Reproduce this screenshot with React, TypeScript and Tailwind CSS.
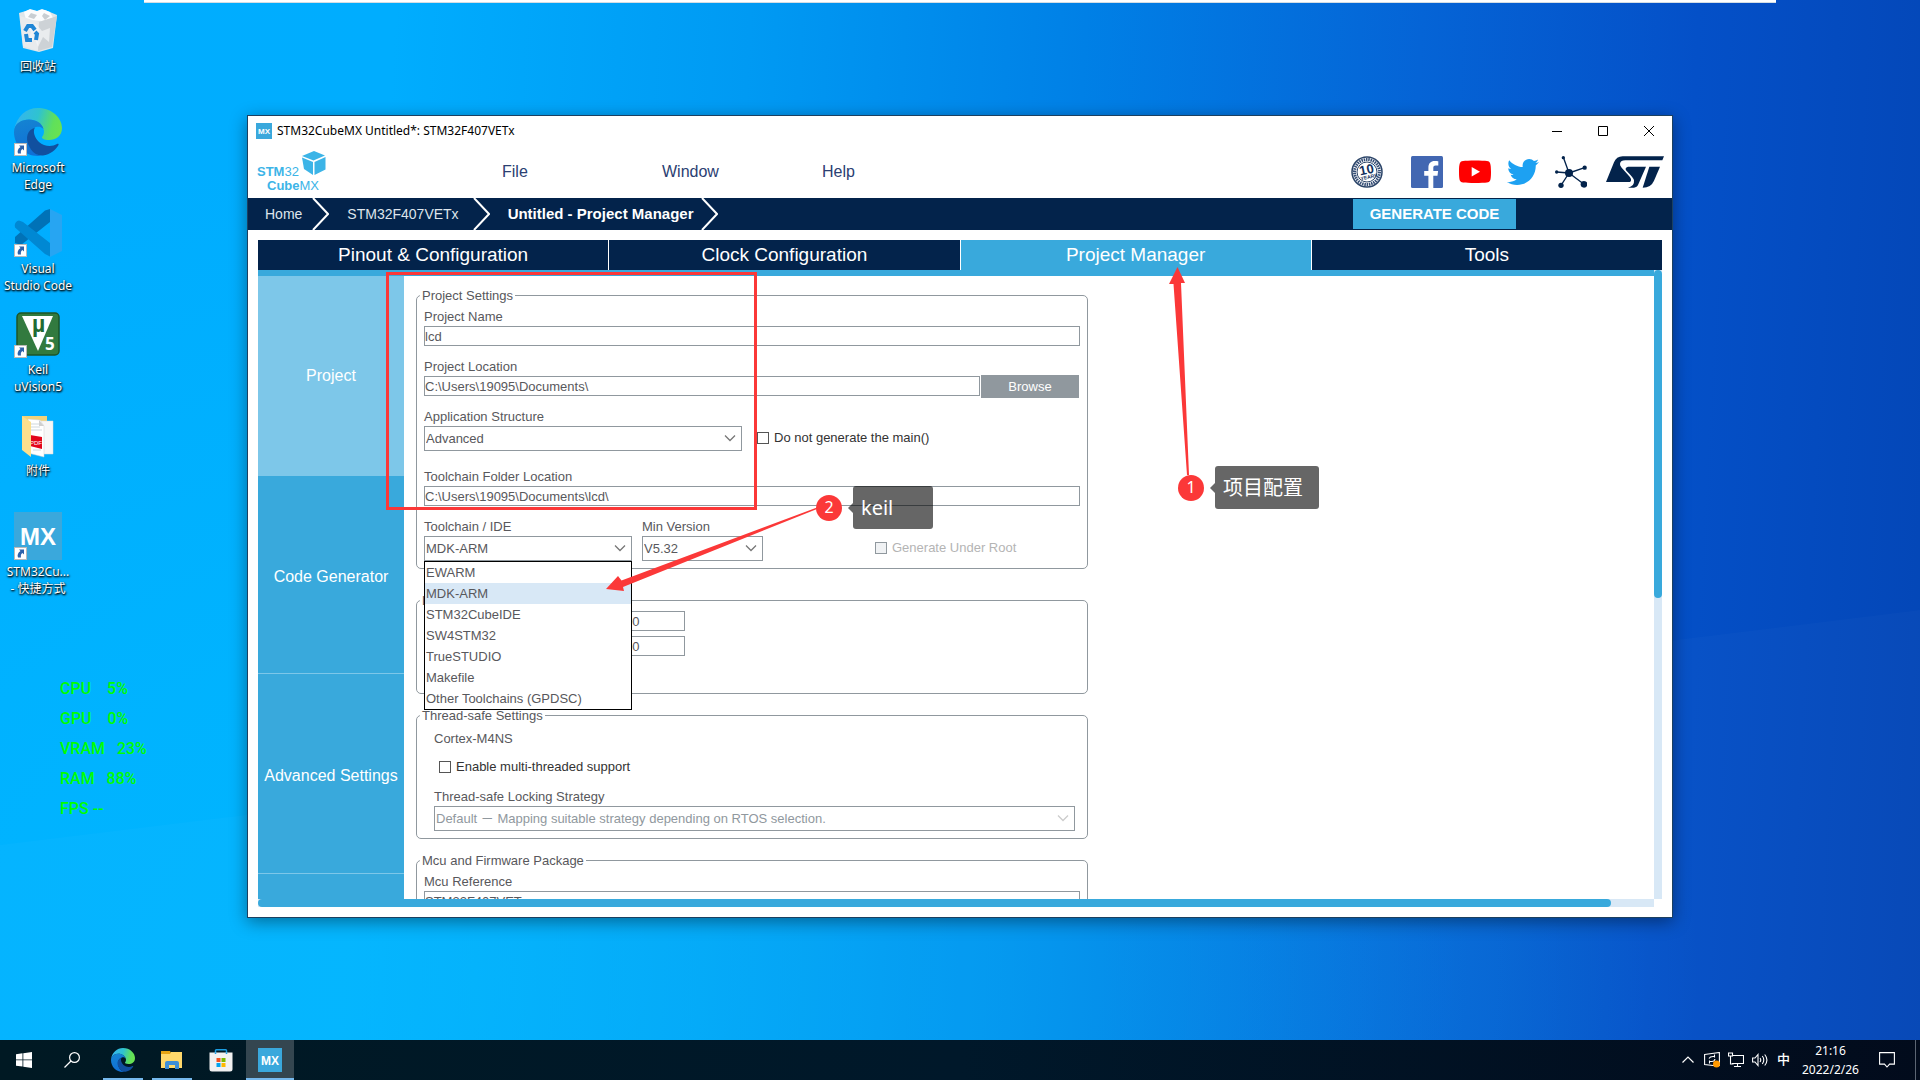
import React, { useState } from "react";
import { FaTwitter } from "react-icons/fa";

const TOOLCHAINS = ["EWARM", "MDK-ARM", "STM32CubeIDE", "SW4STM32", "TrueSTUDIO", "Makefile", "Other Toolchains (GPDSC)"];
const TABS = ["Pinout & Configuration", "Clock Configuration", "Project Manager", "Tools"];
const STATS = ["CPU    5%", "GPU    0%", "VRAM   23%", "RAM   88%", "FPS --"];

const UI_FONT = "font-['Noto_Sans','Noto_Sans_CJK_SC',sans-serif]";
const APP_FONT = "font-['Liberation_Sans','Noto_Sans_CJK_SC',sans-serif]";

/* ---------- Icons ---------- */

function EdgeIcon({ id, className }: { id: string; className: string }) {
  return (
    <svg viewBox="0 0 48 48" className={className} aria-hidden="true">
      <defs>
        <linearGradient id={`${id}-top`} x1="0" y1="0.4" x2="1" y2="0.6">
          <stop offset="0" stopColor="#35b4f0" />
          <stop offset="0.45" stopColor="#2fc3d0" />
          <stop offset="0.8" stopColor="#5fe05c" />
          <stop offset="1" stopColor="#6be24f" />
        </linearGradient>
        <linearGradient id={`${id}-left`} x1="0.3" y1="0" x2="0.5" y2="1">
          <stop offset="0" stopColor="#1583d2" />
          <stop offset="1" stopColor="#0f6fd6" />
        </linearGradient>
      </defs>
      <path fill={`url(#${id}-top)`} d="M0 22C3 8 12 0 24 0c14 0 24 10 24 20 0 8-6 12-13 12-5 0-7.500-1.500-7-3 1-1 2-3 2-6-1-7-8-11.500-15-11.500C8 11.500 2 15 0 22Z" />
      <path fill={`url(#${id}-left)`} d="M0 24C0 15 8 11.500 15 11.500c7 0 13 3.500 14.500 9.500-2.500-2.500-5.500-2.500-7.500-2C16 20.500 13.500 27 14 32c1 8 6 14 13 16h-3C10 48 0 37 0 24Z" />
      <path fill="#11509f" d="M21 19.500C13 22 11.500 30 14.500 37c3 7 8 11 14.500 10.500C36 46.500 42 42 44.500 37c.5-1-.5-1.500-1.500-1C38 39 30 38.500 25 34c-4.500-4.500-6.500-10.500-4-14.500Z" />
    </svg>
  );
}

function RecycleIcon() {
  return (
    <svg viewBox="0 0 48 48" className="size-12" aria-hidden="true">
      <path fill="#dfe6ea" d="M5 6l10-3 8 1 8-1 12 5-4 33-14 4-16-4Z" />
      <path fill="#fbfcfd" d="M10 5l6-3 7 2 5-2 8 3 3 6-11 3-16-1Z" />
      <path fill="#c9ced2" d="M17 6l6 2-3 4-6-2ZM30 6l6 3-5 4-3-4Z" />
      <path fill="#e8ebed" d="M6 9l19 6-1 29-15-5Z" />
      <path fill="#cdd2d6" d="M25 15l18-6-5 31-14 4Z" />
      <path fill="#f5f7f8" d="M12 16l5 9-4 12 8-5 3 8 5-10 6 5 1-14-8 3-6-7Z" opacity="0.7" />
      <g fill="none" stroke="#1f86d6" strokeWidth="4">
        <path d="M11 24l3-5h4l3 4" />
        <path d="M12 27l1 6h5" />
        <path d="M22 33l1-6-2-2" />
      </g>
    </svg>
  );
}

function VsCodeIcon() {
  return (
    <svg viewBox="0 0 48 48" className="size-12" aria-hidden="true">
      <path fill="#0072b7" d="M36 0v13L7 36l-6-2v-6L31 1.500Z" />
      <path fill="#0088d3" d="M1 18c-1-3 1-6 4-6.500L9 13l27 21v13.500L31 45 1 18.500Z" />
      <path fill="#27a5f2" d="M36 0l12 6v36l-12 6Z" />
    </svg>
  );
}

function KeilIcon() {
  return (
    <svg viewBox="0 0 48 48" className="size-12" aria-hidden="true">
      <rect x="3" y="3" width="42" height="42" rx="4" fill="#327a3f" stroke="#1c5529" strokeWidth="1.500" />
      <path fill="#fff" d="M8 6h31L24 41Z" />
      <text x="18" y="22" fontSize="23" fontWeight="700" fill="#1f6b32" fontFamily="Liberation Sans, sans-serif">µ</text>
      <text x="31" y="40" fontSize="17" fontWeight="700" fill="#fff" fontFamily="Open Sans, sans-serif">5</text>
    </svg>
  );
}

function FolderIcon() {
  return (
    <svg viewBox="0 0 48 48" className="size-12" aria-hidden="true">
      <path fill="#f1d27a" d="M8 5h25v10H8Z" />
      <path fill="#f7f7f7" stroke="#d9d9d9" strokeWidth="0.500" d="M24 10h15v33H24Z" />
      <path fill="#fff" stroke="#cfcfcf" strokeWidth="0.500" d="M14 8l12 1 4 6v31l-16-4Z" />
      <path stroke="#cfd8dd" d="M16 13h9M16 16h10M16 19h12M19 39h8" />
      <path fill="#cfcfcf" d="M25 9l5 6h-5Z" />
      <path fill="#e2061b" d="M16 24l12 2v12l-12-3Z" />
      <text x="16" y="34" fontSize="6" fill="#fff" fontFamily="Liberation Sans, sans-serif">PDF</text>
      <path fill="#fbdf8d" d="M8 5l9 6v35l-9-7Z" />
    </svg>
  );
}

function MxIcon({ className }: { className: string }) {
  return (
    <svg viewBox="0 0 48 48" className={className} aria-hidden="true">
      <rect width="48" height="48" fill="#3aa8dc" />
      <text x="24" y="33" fontSize="24" fontWeight="700" fill="#fff" textAnchor="middle" fontFamily="Liberation Sans, sans-serif">MX</text>
    </svg>
  );
}

function ShortcutArrow() {
  return (
    <svg viewBox="0 0 13 13" className="absolute bottom-0 left-0 size-[13px]" aria-hidden="true">
      <rect x="0.500" y="0.500" width="12" height="12" fill="#fff" stroke="#b9b9b9" />
      <path fill="#2d62ab" d="M5 2.500h5v5L8.500 6C7 7 6.500 8 7 10.500H4C3 8 4 5.500 6.500 4Z" />
    </svg>
  );
}

function CubeLogo() {
  return (
    <svg viewBox="0 0 70 42" className="h-[42px] w-[70px]" role="img" aria-label="STM32 CubeMX">
      <g fill="#3cb4e7">
        <path d="M45 5 57 0l11 4.500-11.500 5Z" />
        <path d="M45 6.500l11 4.500V24L47 18Z" />
        <path d="M57.500 11 68.500 6v12.500L57.500 24Z" />
        <g fontSize="13" fontFamily="Liberation Sans, sans-serif">
          <text x="0" y="25"><tspan fontWeight="700">STM</tspan>32</text>
          <text x="10" y="39"><tspan fontWeight="700">Cube</tspan>MX</text>
        </g>
      </g>
    </svg>
  );
}

function LongevityBadge() {
  return (
    <svg viewBox="0 0 32 32" className="size-8" aria-hidden="true">
      <circle cx="16" cy="16" r="15" fill="none" stroke="#2b4468" strokeWidth="1.500" />
      <circle cx="16" cy="16" r="12.500" fill="none" stroke="#344d75" strokeWidth="3" strokeDasharray="1.500 0.800" />
      <circle cx="16" cy="16" r="10" fill="#fff" stroke="#2b4468" />
      <g transform="rotate(-12 16 16)" fill="#12305c" fontWeight="700" textAnchor="middle" fontFamily="Liberation Sans, sans-serif">
        <text x="16" y="18" fontSize="13">10</text>
        <text x="17" y="23" fontSize="5">YEARS</text>
      </g>
    </svg>
  );
}

function FacebookIcon() {
  return (
    <svg viewBox="0 0 32 32" className="size-8" aria-hidden="true">
      <rect width="32" height="32" rx="1.500" fill="#4267b2" />
      <path fill="#fff" d="M22.300 32V19.800h4.200l.6-4.900h-4.800v-3c0-1.400.4-2.400 2.400-2.400h2.600V5.200c-.4-.1-2-.2-3.700-.2-3.700 0-6.200 2.300-6.200 6.400v3.500h-4.200v4.900h4.200V32Z" />
    </svg>
  );
}

function YoutubeIcon() {
  return (
    <svg viewBox="0 0 32 32" className="size-8" aria-hidden="true">
      <path fill="#f00" d="M4 5c4-.7 20-.7 24 0 3 .4 4 2 4 11s-1 10-4 10.500c-4 .6-20 .6-24 0C1 26 0 25 0 16S1 5.400 4 5Z" />
      <path fill="#fff" d="M12.700 11v9.500l8.300-4.700Z" />
    </svg>
  );
}

function CommunityIcon() {
  return (
    <svg viewBox="0 0 96 96" className="size-8" fill="#03234b" aria-hidden="true">
      <path stroke="#03234b" strokeWidth="4" d="M42 51 25 4M42 51l47-16M42 51 5 48M42 51 18 88M42 51l45 34" />
      <circle cx="42" cy="51" r="12" />
      <circle cx="25" cy="5" r="5" />
      <circle cx="89" cy="35" r="6.500" />
      <circle cx="5" cy="48" r="5" />
      <circle cx="18" cy="88" r="8" />
      <circle cx="87" cy="85" r="10" />
    </svg>
  );
}

function StLogo() {
  return (
    <svg viewBox="0 0 174 94" className="h-8 w-[58px]" fill="#03234b" role="img" aria-label="ST">
      <path d="M0 77 24 18Q31 0 50 0h124l-5 12H58Q44 12 42 22q-1 5 5 12l24 27q8 10 1 16Z" />
      <path d="M66 31h54L97 84q-4 10-13 10H66q20-4 18-22-1-7-22-28-8-9 4-13Z" />
      <path d="M130 31h32l-18 42q-9 21-34 21Z" />
    </svg>
  );
}

function Chevron({ className }: { className: string }) {
  return (
    <svg viewBox="0 0 12 8" className={className} fill="none" stroke="currentColor" strokeWidth="1.300" aria-hidden="true">
      <path d="M1 1.500l5 5 5-5" />
    </svg>
  );
}

function CrumbArrow() {
  return (
    <svg viewBox="0 0 17 32" className="h-8 w-[17px]" fill="none" stroke="#fff" strokeWidth="2" aria-hidden="true">
      <path d="M1 0l15 16L1 32" />
    </svg>
  );
}

/* ---------- Desktop ---------- */

type ShortcutProps = { icon: React.ReactNode; label: string; link?: boolean };

function Shortcut({ icon, label, link = true }: ShortcutProps) {
  return (
    <button className="flex h-[101px] w-[76px] flex-col items-center gap-[3px]">
      <span className="relative block size-12">
        {icon}
        {link && <ShortcutArrow />}
      </span>
      <span className="text-xs leading-[17px] whitespace-pre text-white [text-shadow:0_1px_2px_#000,1px_1px_2px_#000]">{label}</span>
    </button>
  );
}

function Wallpaper() {
  return (
    <div className="absolute inset-0 bg-[linear-gradient(93deg,#00adff_0%,#00adfe_20%,#009af3_38%,#0080e6_55%,#0564d6_72%,#0450c8_86%,#0446b6_100%)]">
      <div className="absolute inset-0 bg-[radial-gradient(ellipse_at_25%_90%,rgba(0,190,255,0.5)_0%,rgba(0,190,255,0.35)_25%,rgba(0,190,255,0)_60%)]" />
      <svg viewBox="0 0 1920 1080" preserveAspectRatio="none" className="absolute inset-0 size-full" aria-hidden="true">
        <path fill="#fff" opacity="0.02" d="M0 845 1920 610V1080H0Z" />
      </svg>
    </div>
  );
}

/* ---------- Form parts ---------- */

function Field({ id, label, value }: { id: string; label: string; value: string }) {
  return (
    <div className="flex flex-1 flex-col">
      <label htmlFor={id} className="pt-0.5 leading-[18px]">{label}</label>
      <input id={id} defaultValue={value} className="h-5 w-full border border-[#90989e] bg-white" />
    </div>
  );
}

type SelectProps = { id: string; label: string; options: string[]; value: string; className?: string; disabled?: boolean; onChange?: (v: string) => void; children?: React.ReactNode };

function Select({ id, label, options, value, className = "", disabled, onChange, children }: SelectProps) {
  return (
    <div className={`flex flex-col ${className}`}>
      <label htmlFor={id} className="pt-0.5 leading-[18px]">{label}</label>
      <div className="relative">
        <select
          id={id}
          value={value}
          disabled={disabled}
          onChange={(e) => onChange?.(e.target.value)}
          className="block h-[25px] w-full appearance-none border border-[#90989e] bg-white px-px disabled:text-[#90989e] disabled:opacity-100"
        >
          {options.map((o) => (
            <option key={o}>{o}</option>
          ))}
        </select>
        <Chevron className={`pointer-events-none absolute top-2 right-1.5 h-2 w-3 ${disabled ? "text-[#cccccc]" : "text-[#777777]"}`} />
        {children}
      </div>
    </div>
  );
}

function Check({ label, disabled }: { label: string; disabled?: boolean }) {
  return (
    <label className={`flex h-5 items-center gap-[5px] ${disabled ? "text-[#b4b4b4]" : "text-[#333333]"}`}>
      <input type="checkbox" disabled={disabled} className="size-3 appearance-none border border-[#555555] bg-white checked:bg-[#39a9dc] disabled:border-[#90989e] disabled:bg-[#f0f2f4]" />
      {label}
    </label>
  );
}

function Group({ title, className, children }: { title: string; className: string; children: React.ReactNode }) {
  return (
    <fieldset className="w-[672px] rounded-[5px] border border-[#90989e]">
      <legend className="ml-[3px] px-0.5 pt-0.5 leading-[18px]">{title}</legend>
      <div className={`pt-px ${className}`}>{children}</div>
    </fieldset>
  );
}

function ProjectForm() {
  const [toolchain, setToolchain] = useState("MDK-ARM");
  const [structure, setStructure] = useState("Advanced");
  const [version, setVersion] = useState("V5.32");

  return (
    <form className="flex flex-1 flex-col items-start overflow-hidden bg-white pt-[9px] pl-3 text-[13px] text-[#58585c]">
      <Group title="Project Settings" className="px-[7px] pb-[7px]">
        <div className="flex flex-col gap-2.5">
          <Field id="name" label="Project Name" value="lcd" />
          <div className="flex items-end gap-px">
            <Field id="location" label="Project Location" value="C:\Users\19095\Documents\" />
            <button type="button" className="mr-px -mb-0.5 h-[23px] w-[98px] bg-[#90989e] text-white">Browse</button>
          </div>
          <div className="flex items-end gap-[15px]">
            <Select id="structure" label="Application Structure" options={["Advanced", "Basic"]} value={structure} onChange={setStructure} className="w-[318px]" />
            <div className="pb-[3px]"><Check label="Do not generate the main()" /></div>
          </div>
          <div className="flex pt-[5px]">
            <Field id="folder" label="Toolchain Folder Location" value="C:\Users\19095\Documents\lcd\" />
          </div>
          <div className="flex items-end">
            <Select id="toolchain" label="Toolchain / IDE" options={TOOLCHAINS} value={toolchain} onChange={setToolchain} className="w-52">
              {/* Open list of the toolchain box */}
              <ul role="listbox" className="absolute top-full left-0 z-10 w-full border border-black bg-white">
                {TOOLCHAINS.map((t) => (
                  <li
                    key={t}
                    role="option"
                    aria-selected={t === toolchain}
                    onClick={() => setToolchain(t)}
                    className={`px-px leading-[21px] ${t === toolchain ? "bg-[#d8e8f6]" : ""}`}
                  >
                    {t}
                  </li>
                ))}
              </ul>
            </Select>
            <Select id="version" label="Min Version" options={["V5.32", "V5.27"]} value={version} onChange={setVersion} className="ml-2.5 w-[121px]" />
            <div className="ml-28 pb-[3px]"><Check label="Generate Under Root" disabled /></div>
          </div>
        </div>
      </Group>

      <div className="mt-[21px]">
        <Group title="Linker Settings" className="px-[17px] pb-[37px]">
          <div className="grid grid-cols-[169px_82px] gap-y-[5px]">
            <label htmlFor="heap">Minimum Heap Size</label>
            <input id="heap" defaultValue="0x200" className="h-5 border border-[#90989e]" />
            <label htmlFor="stack">Minimum Stack Size</label>
            <input id="stack" defaultValue="0x400" className="h-5 border border-[#90989e]" />
          </div>
        </Group>
      </div>

      <div className="mt-[11px]">
        <Group title="Thread-safe Settings" className="pr-3 pb-[7px] pl-[17px]">
          <div className="pt-1 leading-[18px]">Cortex-M4NS</div>
          <div className="py-[9px] pl-[5px]"><Check label="Enable multi-threaded support" /></div>
          <Select id="locking" label="Thread-safe Locking Strategy" disabled value="Default － Mapping suitable strategy depending on RTOS selection." options={["Default － Mapping suitable strategy depending on RTOS selection."]} />
        </Group>
      </div>

      <div className="mt-[11px]">
        <Group title="Mcu and Firmware Package" className="px-[7px] pb-[7px]">
          <Field id="mcu" label="Mcu Reference" value="STM32F407VETx" />
        </Group>
      </div>
    </form>
  );
}

/* ---------- Application window ---------- */

function CubeWindow() {
  return (
    <section className={`absolute inset-x-[247px] top-[115px] bottom-[122px] flex flex-col border border-[#1c4060] bg-white shadow-[0_4px_16px_rgba(0,0,0,0.4)] ${APP_FONT}`}>
      <header className={`flex h-[30px] items-center pl-2 text-xs text-black ${UI_FONT}`}>
        <MxIcon className="size-4" />
        <h1 className="ml-[5px] flex-1">STM32CubeMX Untitled*: STM32F407VETx</h1>
        <div className="flex pb-px">
          <button aria-label="Minimize" className="flex h-7 w-[46px] items-center justify-center">
            <svg viewBox="0 0 10 10" className="size-2.5" stroke="#000"><path d="M0 5.500h10" /></svg>
          </button>
          <button aria-label="Maximize" className="flex h-7 w-[46px] items-center justify-center">
            <svg viewBox="0 0 10 10" className="size-2.5" fill="none" stroke="#000"><path d="M.5.5h9v9h-9Z" /></svg>
          </button>
          <button aria-label="Close" className="flex h-7 w-[46px] items-center justify-center">
            <svg viewBox="0 0 10 10" className="size-2.5" stroke="#000"><path d="M0 0l10 10M10 0 0 10" /></svg>
          </button>
        </div>
      </header>

      <div className="flex h-[52px] items-center pr-2 pl-[9px]">
        <CubeLogo />
        <nav className="ml-[175px] flex flex-1 text-base text-[#2b4072]">
          <button className="w-40 text-left">File</button>
          <button className="w-40 text-left">Window</button>
          <button className="w-40 text-left">Help</button>
        </nav>
        <div className="flex items-center gap-4">
          <a href="#longevity" aria-label="10 years longevity" className="mr-3"><LongevityBadge /></a>
          <a href="#facebook" aria-label="Facebook"><FacebookIcon /></a>
          <a href="#youtube" aria-label="YouTube"><YoutubeIcon /></a>
          <a href="#twitter" aria-label="Twitter"><FaTwitter className="size-8 text-[#1da1f2]" /></a>
          <a href="#community" aria-label="Community"><CommunityIcon /></a>
          <a href="#st" className="ml-[3px]"><StLogo /></a>
        </div>
      </div>

      <div className="flex h-8 items-center bg-[#03234b] text-sm text-white">
        <nav className="flex flex-1 items-center">
          <a href="#home" className="pr-2.5 pl-[17px] text-[#dfe5ec]">Home</a>
          <CrumbArrow />
          <a href="#mcu" className="pr-3.5 pl-[18px] text-[#dfe5ec]">STM32F407VETx</a>
          <CrumbArrow />
          <a href="#project" className="pr-2 pl-[18px] text-[15px] font-bold">Untitled - Project Manager</a>
          <CrumbArrow />
        </nav>
        <button className="mr-[156px] h-[30px] w-[163px] bg-[#39a9dc] text-[15px] font-bold">GENERATE CODE</button>
      </div>

      <div className="m-2.5 flex min-h-0 flex-1 flex-col">
        <div role="tablist" className="grid h-[30px] shrink-0 grid-cols-4 gap-px text-[19px] text-white">
          {TABS.map((t) => (
            <button key={t} role="tab" aria-selected={t === "Project Manager"} className={t === "Project Manager" ? "bg-[#39a9dc]" : "bg-[#03234b]"}>
              {t}
            </button>
          ))}
        </div>

        <div className="flex min-h-0 flex-1">
          <div className="flex min-w-0 flex-1 flex-col border-t-[6px] border-[#39a9dc]">
            <div className="flex min-h-0 flex-1">
              <aside className="flex w-[146px] shrink-0 flex-col overflow-hidden bg-[#39a9dc] text-base text-white">
                <button className="h-[200px] shrink-0 bg-[#7dc7e9]">Project</button>
                <button className="h-[198px] shrink-0 border-b border-[#7dc7e9] pt-1">Code Generator</button>
                <button className="h-[200px] shrink-0 border-b border-[#7dc7e9] pt-1 whitespace-nowrap">Advanced Settings</button>
              </aside>
              <ProjectForm />
            </div>
          </div>
          <div className="w-2 bg-[#d8e8f6]">
            <div className="h-[328px] rounded-full bg-[#39a9dc]" />
          </div>
        </div>
        <div className="mr-2 h-2 shrink-0 bg-[#d8e8f6]">
          <div className="mr-[43px] h-2 rounded-full bg-[#39a9dc]" />
        </div>
      </div>
    </section>
  );
}

/* ---------- Notes drawn over the screen ---------- */

function Note({ n, text, className, width }: { n: number; text: string; className: string; width: string }) {
  return (
    <div className={`absolute flex items-center text-white ${className}`}>
      <span className="flex size-[26px] items-center justify-center rounded-full bg-[#fb3838] pb-0.5 text-base leading-none">{n}</span>
      <span className="ml-1.5 border-y-[5px] border-r-[5px] border-y-transparent border-r-black/60" />
      <span className={`h-[43px] rounded-[3px] bg-black/60 pl-2 text-xl leading-[43px] ${width}`}>{text}</span>
    </div>
  );
}

function Annotations() {
  return (
    <div className={`pointer-events-none absolute inset-0 z-20 ${UI_FONT}`}>
      <div className="absolute top-[272px] left-[386px] h-[238px] w-[371px] border-[3px] border-[#fb3838]" />
      <svg className="absolute inset-0 size-full" fill="#fb3838" aria-hidden="true">
        <path d="M1177.500 267 1185 283h-4l8 192h-2L1173.500 284h-4.500Z" />
        <path d="M606 589 618 576l3.500 4.500L817 507.500v1.500L623 587l1 4Z" />
      </svg>
      <Note n={1} text="项目配置" className="top-[466px] left-[1178px]" width="w-[104px]" />
      <Note n={2} text="keil" className="top-[486px] left-[816px]" width="w-20" />
    </div>
  );
}

/* ---------- Taskbar ---------- */

function TaskButton({ label, state, children }: { label: string; state?: "open" | "active"; children: React.ReactNode }) {
  return (
    <button aria-label={label} className={`relative flex h-10 w-12 items-center justify-center ${state === "active" ? "bg-[#344650]" : ""}`}>
      {children}
      {state && <span className={`absolute bottom-0 h-0.5 bg-[#76b9ed] ${state === "active" ? "inset-x-0" : "inset-x-1"}`} />}
    </button>
  );
}

function Taskbar() {
  return (
    <footer className="relative flex h-10 shrink-0 items-center bg-[linear-gradient(90deg,#001923_0%,#00182a_50%,#020b1c_100%)] text-xs text-white">
      <TaskButton label="Start">
        <svg viewBox="0 0 16 16" className="size-4" fill="#fff"><path d="M0 2.200 6.500 1.300v6.200H0ZM7.300 1.200 16 0v7.500H7.300ZM0 8.300h6.500v6.300L0 13.700ZM7.300 8.300H16V16l-8.700-1.200Z" /></svg>
      </TaskButton>
      <TaskButton label="Search">
        <svg viewBox="0 0 16 16" className="size-4" fill="none" stroke="#fff" strokeWidth="1.200"><circle cx="10.500" cy="5.500" r="4.900" /><path d="M7 9 .5 15.500" /></svg>
      </TaskButton>
      <div className="ml-[3px] flex flex-1 gap-px">
        <TaskButton label="Microsoft Edge" state="open"><EdgeIcon id="task-edge" className="size-6" /></TaskButton>
        <TaskButton label="File Explorer" state="open">
          <svg viewBox="0 0 24 24" className="size-6">
            <path fill="#e6a414" d="M1 3h9l1 2v3H1Z" />
            <path fill="#ffd86b" d="M1 6h9l1-2h11v16H1Z" />
            <path fill="#3d8fd8" d="M5 21v-6q0-2 2-2h10q2 0 2 2v6h-4v-4H9v4Z" />
          </svg>
        </TaskButton>
        <TaskButton label="Microsoft Store">
          <svg viewBox="0 0 24 24" className="size-6">
            <path fill="none" stroke="#1b9de2" strokeWidth="1.500" d="M6.500 7V2.500Q6.500 1.700 7.300 1.700h9.400q.8 0 .8.800V7" />
            <path fill="#f1f1f1" d="M.5 4.500h23V21q0 2.500-2.500 2.500H3Q.5 23.500.5 21Z" />
            <path fill="none" stroke="#1b9de2" strokeWidth="1.500" d="M6.500 4.500V6M17.500 4.500V6" />
            <path fill="#f25022" d="M7.500 10h4v4h-4Z" />
            <path fill="#7fba00" d="M12.500 10h4v4h-4Z" />
            <path fill="#00a4ef" d="M7.500 15h4v4h-4Z" />
            <path fill="#ffb900" d="M12.500 15h4v4h-4Z" />
          </svg>
        </TaskButton>
        <TaskButton label="STM32CubeMX" state="active"><MxIcon className="size-6" /></TaskButton>
      </div>

      <div className="flex items-center gap-2">
        <svg viewBox="0 0 16 16" className="size-4" fill="none" stroke="#fff" strokeWidth="1.200"><path d="M2.500 10.500 8 5l5.500 5.500" /></svg>
        <svg viewBox="0 0 16 16" className="size-4" fill="none" stroke="#fff" strokeWidth="1.100">
          <path d="M.6 2.500 15.400.5v13L9 13.500.6 12.500Z" />
          <path d="M5 6.500Q6 4.500 9 4.500h1.500M10.500 2.500v3M11 7Q10.500 9.500 8 9.500H5.500M5.500 11.500v-3" />
          <circle cx="12.500" cy="12" r="3.500" fill="#ff9800" stroke="none" />
        </svg>
        <svg viewBox="0 0 16 16" className="size-4" fill="none" stroke="#fff" strokeWidth="1.100">
          <path d="M5 3.500h10.500v8H4M9.500 11.500v3M6 14.500h7M.5 1h4v3h-4ZM2.500 4v8h3" />
        </svg>
        <svg viewBox="0 0 16 16" className="size-4" fill="none" stroke="#fff" strokeWidth="1.100">
          <path d="M.6 6H3l3-3.500v11L3 10H.6ZM8 6q1.500 2 0 4M10.300 4q3 4 0 8M12.700 2.500q4.500 5.500 0 11" />
        </svg>
        <span className="w-[15px] text-center text-[13px] font-medium">中</span>
      </div>
      <div className="ml-[5px] w-[69px] text-center leading-[19px]">
        <div>21:16</div>
        <div>2022/2/26</div>
      </div>
      <svg viewBox="0 0 16 16" className="mr-5 ml-3.5 size-4" fill="none" stroke="#fff" strokeWidth="1.100" aria-hidden="true">
        <path d="M.6.6h14.800v11.500h-4.800L8 15l-2.500-2.900H.6Z" />
      </svg>
      <span className="mr-1 h-10 w-px bg-[#5c6573]" />
    </footer>
  );
}

export default function App() {
  return (
    <div className={`relative flex h-screen w-full flex-col overflow-hidden ${UI_FONT}`}>
      <Wallpaper />
      <main className="relative min-h-0 flex-1">
        <div className="absolute inset-x-36 top-0 h-[3px] border-b border-[#d4dde4] bg-white" />
        <div className="flex flex-col pt-[7px]">
          <Shortcut icon={<RecycleIcon />} label="回收站" link={false} />
          <Shortcut icon={<EdgeIcon id="desk-edge" className="size-12" />} label={"Microsoft\nEdge"} />
          <Shortcut icon={<VsCodeIcon />} label={"Visual\nStudio Code"} />
          <Shortcut icon={<KeilIcon />} label={"Keil\nuVision5"} />
          <Shortcut icon={<FolderIcon />} label="附件" link={false} />
          <Shortcut icon={<MxIcon className="size-12" />} label={"STM32Cu...\n- 快捷方式"} />
        </div>
        <ul className="absolute top-[674px] left-[60px] font-['Roboto',sans-serif] text-base leading-[30px] font-medium whitespace-pre text-[#00ff00]">
          {STATS.map((s) => (
            <li key={s}>{s}</li>
          ))}
        </ul>
        <CubeWindow />
      </main>
      <Taskbar />
      <Annotations />
    </div>
  );
}
